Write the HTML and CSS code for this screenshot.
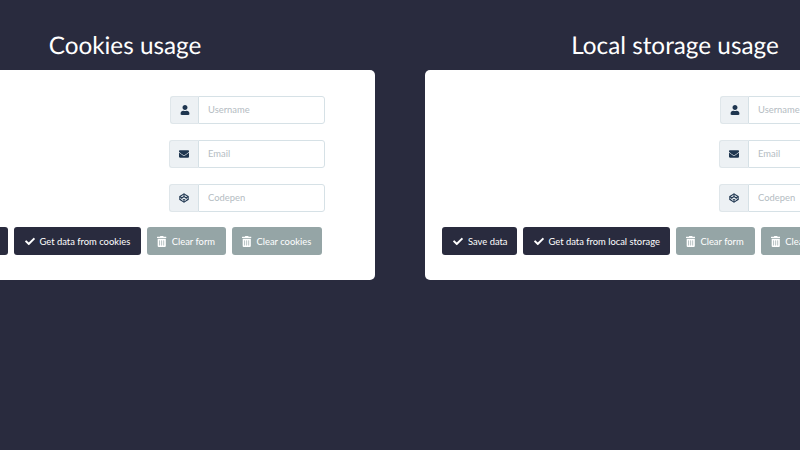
FILE: index.html
```html
<!DOCTYPE html>
<html lang="en">
<head>
    <meta charset="UTF-8">
    <meta name="viewport" content="width=device-width, initial-scale=1.0">
    <title>Cookies and local storage</title>
    <link rel="stylesheet" href="styles.css">
</head>
<body>
    <svg class="sprites" xmlns="http://www.w3.org/2000/svg">
        <symbol id="i-user" viewBox="0 0 448 512"><path d="M224 256c70.7 0 128-57.3 128-128S294.7 0 224 0 96 57.3 96 128s57.3 128 128 128zm89.6 32h-16.7c-22.2 10.2-46.9 16-72.9 16s-50.6-5.8-72.9-16h-16.7C60.2 288 0 348.2 0 422.4V464c0 26.5 21.5 48 48 48h352c26.5 0 48-21.5 48-48v-41.6c0-74.2-60.2-134.4-134.4-134.4z"/></symbol>
        <symbol id="i-mail" viewBox="0 0 512 512"><path d="M502.3 190.8c3.9-3.1 9.7-.2 9.7 4.7V400c0 26.5-21.5 48-48 48H48c-26.5 0-48-21.5-48-48V195.6c0-5 5.7-7.8 9.7-4.7 22.4 17.4 52.1 39.5 154.1 113.6 21.1 15.4 56.7 47.8 92.2 47.6 35.7.3 72-32.8 92.3-47.6 102-74.1 131.6-96.3 154-113.7zM256 320c23.2.4 56.6-29.2 73.4-41.4 132.7-96.3 142.8-104.7 173.4-128.7 5.8-4.5 9.2-11.5 9.2-18.9v-19c0-26.5-21.5-48-48-48H48C21.5 64 0 85.5 0 112v19c0 7.4 3.4 14.3 9.2 18.9 30.6 23.9 40.7 32.4 173.4 128.7 16.8 12.2 50.2 41.8 73.4 41.4z"/></symbol>
        <symbol id="i-codepen" viewBox="0 0 24 24"><g fill="none" stroke="currentColor" stroke-width="2.6" stroke-linejoin="round"><path d="M12 2l10 6.5v7L12 22 2 15.5v-7z"/><path d="M12 22v-6.5M22 8.5l-10 7-10-7M2 15.5l10-7 10 7M12 2v6.5"/></g></symbol>
        <symbol id="i-check" viewBox="0 0 512 512"><path d="M173.898 439.404l-166.4-166.4c-9.997-9.997-9.997-26.206 0-36.204l36.203-36.204c9.997-9.998 26.207-9.998 36.204 0L192 312.69 432.095 72.596c9.997-9.997 26.207-9.997 36.204 0l36.203 36.204c9.997 9.997 9.997 26.206 0 36.204l-294.4 294.401c-9.998 9.997-26.207 9.997-36.204-.001z"/></symbol>
        <symbol id="i-trash" viewBox="0 0 448 512"><path d="M32 464a48 48 0 0 0 48 48h288a48 48 0 0 0 48-48V128H32zm272-256a16 16 0 0 1 32 0v224a16 16 0 0 1-32 0zm-96 0a16 16 0 0 1 32 0v224a16 16 0 0 1-32 0zm-96 0a16 16 0 0 1 32 0v224a16 16 0 0 1-32 0zM432 32H312l-9-19a24 24 0 0 0-22-13H167a24 24 0 0 0-22 13l-9 19H16A16 16 0 0 0 0 48v32a16 16 0 0 0 16 16h416a16 16 0 0 0 16-16V48a16 16 0 0 0-16-16z"/></symbol>
    </svg>

    <div class="columns">
        <section class="column">
            <h1>Cookies usage</h1>
            <form class="card">
                <div class="field">
                    <span class="addon"><svg class="icon"><use href="#i-user"/></svg></span>
                    <input type="text" placeholder="Username">
                </div>
                <div class="field">
                    <span class="addon addon-wide"><svg class="icon"><use href="#i-mail"/></svg></span>
                    <input type="text" placeholder="Email">
                </div>
                <div class="field">
                    <span class="addon addon-wide"><svg class="icon"><use href="#i-codepen"/></svg></span>
                    <input type="text" placeholder="Codepen">
                </div>
                <div class="buttons buttons-cookies">
                    <button type="button" class="btn btn-dark btn-save"><svg class="icon"><use href="#i-check"/></svg>Save data</button>
                    <button type="button" class="btn btn-dark btn-get-cookies"><svg class="icon"><use href="#i-check"/></svg>Get data from cookies</button>
                    <button type="button" class="btn btn-grey"><svg class="icon"><use href="#i-trash"/></svg>Clear form</button>
                    <button type="button" class="btn btn-grey"><svg class="icon"><use href="#i-trash"/></svg>Clear cookies</button>
                </div>
            </form>
        </section>

        <section class="column">
            <h1>Local storage usage</h1>
            <form class="card">
                <div class="field">
                    <span class="addon"><svg class="icon"><use href="#i-user"/></svg></span>
                    <input type="text" placeholder="Username">
                </div>
                <div class="field">
                    <span class="addon addon-wide"><svg class="icon"><use href="#i-mail"/></svg></span>
                    <input type="text" placeholder="Email">
                </div>
                <div class="field">
                    <span class="addon addon-wide"><svg class="icon"><use href="#i-codepen"/></svg></span>
                    <input type="text" placeholder="Codepen">
                </div>
                <div class="buttons buttons-storage">
                    <button type="button" class="btn btn-dark btn-save"><svg class="icon"><use href="#i-check"/></svg>Save data</button>
                    <button type="button" class="btn btn-dark"><svg class="icon"><use href="#i-check"/></svg>Get data from local storage</button>
                    <button type="button" class="btn btn-grey"><svg class="icon"><use href="#i-trash"/></svg>Clear form</button>
                    <button type="button" class="btn btn-grey"><svg class="icon"><use href="#i-trash"/></svg>Clear local storage</button>
                </div>
            </form>
        </section>
    </div>
</body>
</html>
```

FILE: styles.css
```css
* {
    box-sizing: border-box;
}

html, body {
    height: 100%;
}

body {
    margin: 0;
    overflow: hidden;
    font-family: Lato, "Open Sans", sans-serif;
    text-rendering: geometricPrecision;
    background-color: #292b3e;
}

.sprites {
    display: none;
}

.columns {
    display: flex;
    justify-content: center;
    gap: 50px;
}

.column {
    flex: none;
    width: 500px;
}

h1 {
    margin: 0;
    height: 70px;
    padding-top: 28px;
    font-size: 24.3px;
    font-weight: 400;
    line-height: 35px;
    color: #fff;
    text-align: center;
}

.card {
    height: 210px;
    padding-top: 26px;
    background-color: #fff;
    border-radius: 5px;
}

.field {
    display: flex;
    justify-content: flex-end;
    height: 28px;
    margin-bottom: 16px;
    padding-right: 50px;
}

.addon {
    display: flex;
    align-items: center;
    justify-content: center;
    width: 28px;
    color: #1f3650;
    background-color: #edf1f4;
    border: 1px solid #dfe6ea;
    border-right: 0;
    border-radius: 3px 0 0 3px;
}

.addon-wide {
    width: 29px;
}

.addon .icon {
    width: 10px;
    height: 10px;
}

input {
    width: 127px;
    height: 28px;
    padding: 0 0 2px 9px;
    font-family: inherit;
    font-size: 9.4px;
    color: #333;
    background-color: #fff;
    border: 1px solid #d6e1e6;
    border-radius: 0 3px 3px 0;
    outline: none;
}

input::placeholder {
    color: #b4bcc2;
    opacity: 1;
}

.buttons {
    display: flex;
    gap: 6px;
    margin-top: -1px;
    white-space: nowrap;
}

.buttons-cookies {
    padding-left: 58px;
}

.buttons-storage {
    padding-left: 17px;
}

.btn {
    display: flex;
    flex: none;
    align-items: center;
    height: 28px;
    font-family: inherit;
    font-size: 9.4px;
    color: #fff;
    border: 0;
    border-radius: 3px;
}

.btn .icon {
    height: 11px;
    margin-right: 5px;
}

.btn-dark {
    padding: 0 10px 0 11px;
    background-color: #292b3e;
}

.btn-dark .icon {
    width: 10px;
}

.btn-save {
    padding-right: 9px;
}

.btn-get-cookies {
    padding-right: 11px;
}

.btn-grey {
    padding: 0 11px 0 10px;
    background-color: #95a5a6;
}

.btn-grey .icon {
    width: 9.5px;
}

.icon {
    fill: currentColor;
}
```
